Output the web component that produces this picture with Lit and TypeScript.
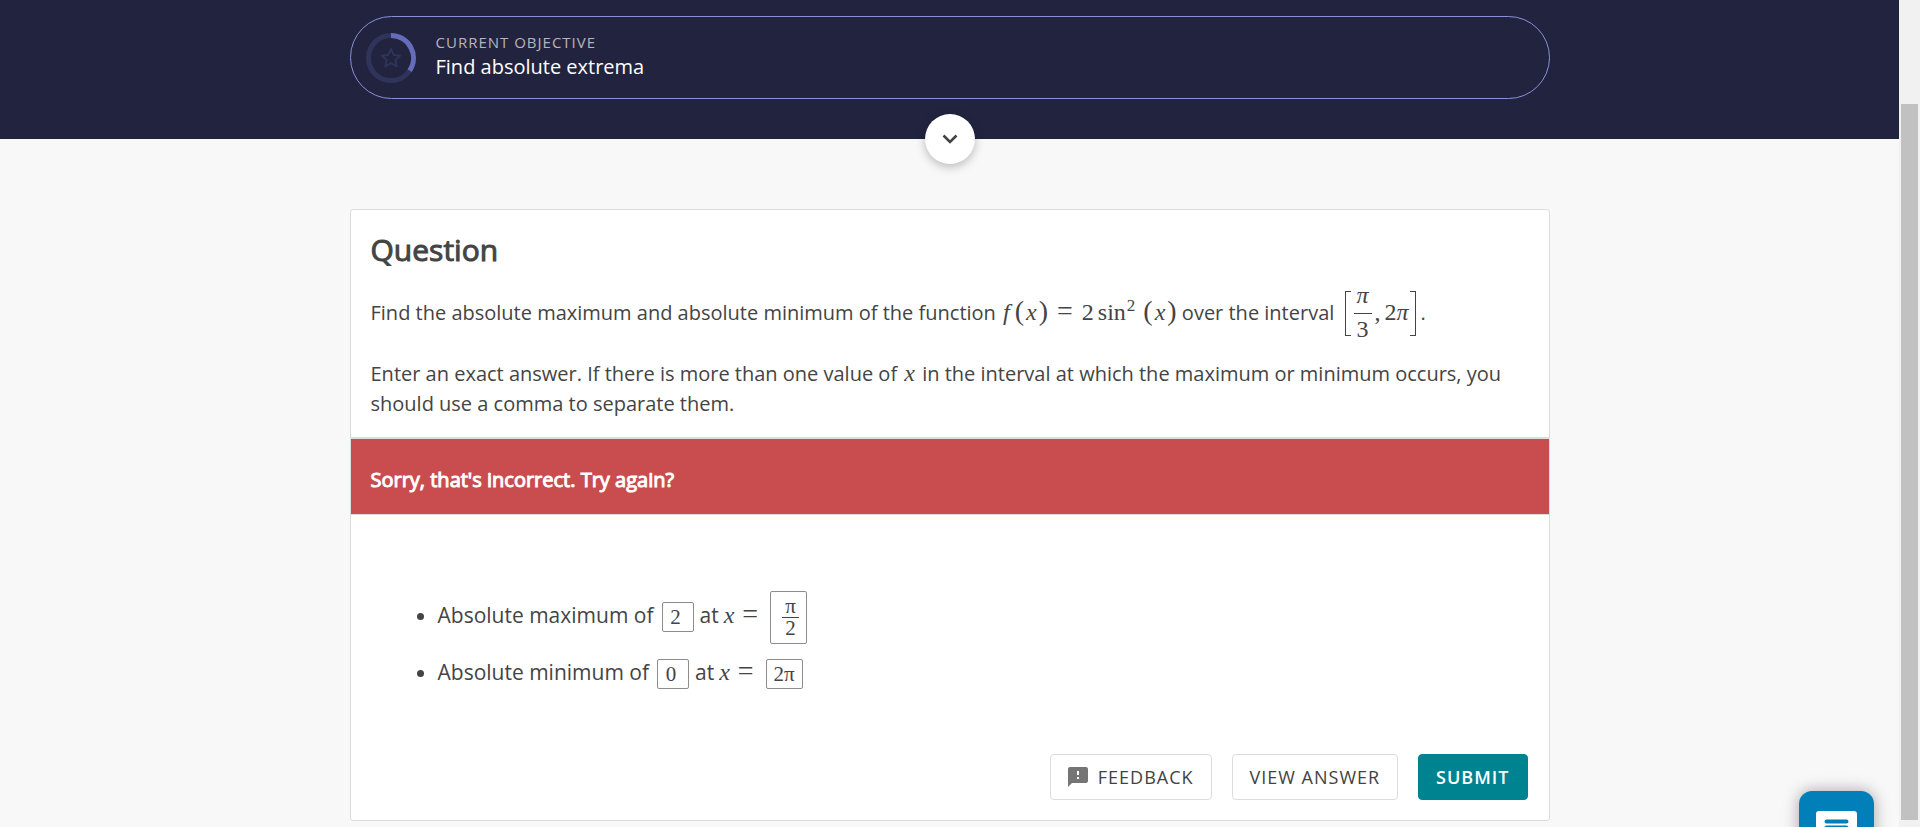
import { LitElement, html, css } from "lit";
import { customElement, property } from "lit/decorators.js";

@customElement("objective-pill")
class ObjectivePill extends LitElement {
  @property() heading = "";
  @property() label = "";

  static styles = css`
    :host {
      display: block;
    }
    .pill {
      display: flex;
      align-items: center;
      gap: 20px;
      box-sizing: border-box;
      min-height: 83px;
      padding: 0 15px;
      border: 1px solid #8b90d8;
      border-radius: 42px;
      color: #fff;
    }
    .ring {
      flex: none;
      width: 50px;
      height: 50px;
    }
    .text {
      padding-bottom: 4px;
    }
    .label {
      font-size: 15px;
      line-height: 22px;
      letter-spacing: 1px;
      color: #b5b5bb;
    }
    .name {
      font-size: 20px;
      line-height: 27px;
    }
  `;

  render() {
    return html`
      <section class="pill">
        <svg class="ring" viewBox="0 0 50 50" fill="none" aria-hidden="true">
          <circle cx="25" cy="25" r="22.5" stroke="#30345a" stroke-width="5" />
          <path d="M25 2.5A22.5 22.5 0 0 1 43.6 37.6" stroke="#656cb9" stroke-width="5" />
          <path
            d="M25 15.8l2.700 6.200 6.600.6-5 4.400 1.500 6.500-5.800-3.400-5.800 3.400 1.500-6.500-5-4.400 6.600-.6z"
            stroke="#30345a"
            stroke-width="1.8"
            stroke-linejoin="round"
          />
        </svg>
        <div class="text">
          <div class="label">${this.label}</div>
          <div class="name">${this.heading}</div>
        </div>
      </section>
    `;
  }
}

@customElement("question-card")
class QuestionCard extends LitElement {
  static styles = css`
    :host {
      display: block;
      box-sizing: border-box;
      border: 1px solid #dcdcdc;
      border-radius: 3px;
      background: #fff;
      color: #444;
    }
    .prompt {
      padding: 20px 20px 18px;
      font-size: 20px;
      line-height: 30px;
    }
    h1 {
      margin: 0;
      font-size: 30px;
      line-height: 40px;
      font-weight: 400;
      -webkit-text-stroke: 1px currentColor;
    }
    p {
      margin: 0;
    }
    .statement {
      margin: 18px 0 20px;
    }
    .math {
      font-family: "Liberation Serif", serif;
      font-size: 24px;
      line-height: 24px;
      white-space: nowrap;
    }
    .math sup {
      margin-left: 1px;
      font-size: 17px;
      line-height: 0;
    }
    .fn {
      margin: 0 5px 0 2px;
    }
    .var {
      margin: 0 2px;
    }
    .big {
      font-size: 28px;
      line-height: 24px;
    }
    .rel {
      margin: 0 9px;
    }
    .thin {
      margin-left: 4px;
    }
    .arg {
      margin-left: 8px;
    }
    .interval {
      display: inline-flex;
      align-items: center;
      vertical-align: -16px;
      margin: 0 5px;
    }
    .bracket {
      box-sizing: border-box;
      width: 6px;
      height: 45px;
      border: 1px solid #444;
    }
    .open {
      border-right: 0;
      margin-right: 3px;
    }
    .close {
      border-left: 0;
    }
    .inner {
      padding: 0 1px 4px 0;
    }
    .frac {
      display: inline-flex;
      flex-direction: column;
      align-items: center;
      width: 18px;
      margin: -5px 3px -5px 0;
    }
    .num {
      padding: 2px 0 8px;
      line-height: 20px;
    }
    .den {
      align-self: stretch;
      border-top: 1px solid currentColor;
      line-height: 30px;
      text-align: center;
    }
    .banner {
      padding: 26px 20px 19px;
      border-top: 2px solid #dcdcdc;
      border-bottom: 1px solid #dcdcdc;
      background: #c94d4f;
      color: #fff;
      font-size: 20px;
      line-height: 30px;
      -webkit-text-stroke: 1px currentColor;
    }
    ul {
      display: grid;
      gap: 10px;
      margin: 0;
      padding: 73px 20px 62px 87px;
      font-size: 21px;
    }
    .answer {
      display: flex;
      align-items: center;
      min-height: 36px;
    }
    .tall {
      min-height: 58px;
    }
    .answer label {
      padding-bottom: 4px;
      line-height: 28px;
    }
    .field {
      box-sizing: border-box;
      width: 32px;
      height: 30px;
      margin: 0 6px 0 8px;
      padding: 0 4px 0 0;
      border: 1px solid #8c8c8c;
      border-radius: 2px;
      background: #fff;
      color: inherit;
      font-family: "Liberation Serif", serif;
      font-size: 21px;
      text-align: center;
    }
    .wide {
      width: 37px;
      margin: 0 0 0 12px;
      padding: 0;
    }
    .fraction {
      display: grid;
      align-content: center;
      justify-items: center;
      height: 53px;
      padding-left: 4px;
    }
    .part {
      box-sizing: border-box;
      width: 17px;
      height: 22px;
      padding: 0;
      border: 0;
      background: none;
      color: inherit;
      font: inherit;
      text-align: center;
    }
    .lower {
      border-top: 1px solid #444;
    }
    .eq {
      margin-left: 5px;
      font-family: "Liberation Serif", serif;
      font-size: 24px;
    }
    .sign {
      margin-left: 2px;
    }
    .actions {
      display: flex;
      justify-content: flex-end;
      flex-wrap: wrap;
      gap: 20px;
      padding: 0 21px 20px 20px;
    }
    .btn {
      display: inline-flex;
      align-items: center;
      gap: 10px;
      box-sizing: border-box;
      height: 46px;
      padding: 0 17px;
      border: 1px solid #dcdcdc;
      border-radius: 4px;
      background: #fff;
      color: #424242;
      font-family: inherit;
      font-size: 18px;
      font-weight: 500;
      letter-spacing: 1px;
      text-transform: uppercase;
      cursor: pointer;
    }
    .btn svg {
      width: 20px;
      height: 20px;
      fill: #757575;
    }
    .primary {
      border-color: #008391;
      background: #008391;
      color: #fff;
      font-weight: 600;
    }
  `;

  render() {
    return html`
      <section class="prompt">
        <h1>Question</h1>
        <p class="statement">
          Find the absolute maximum and absolute minimum of the function
          <span class="math"
            ><i class="fn">f</i><span class="big">(</span><i class="var">x</i
            ><span class="big">)</span><span class="big rel">=</span>2<span class="thin">sin</span
            ><sup>2</sup><span class="big arg">(</span><i class="var">x</i
            ><span class="big">)</span></span
          >
          over the interval
          <span class="math interval"
            ><span class="bracket open"></span
            ><span class="frac"><i class="num">π</i><span class="den">3</span></span
            ><span class="inner">,<span class="thin">2<i>π</i></span></span
            ><span class="bracket close"></span></span
          >.
        </p>
        <p>
          Enter an exact answer. If there is more than one value of
          <i class="math var">x</i> in the interval at which the maximum or minimum occurs, you
          should use a comma to separate them.
        </p>
      </section>
      <div class="banner" role="alert">Sorry, that's incorrect. Try again?</div>
      <form @submit=${(e: Event) => e.preventDefault()}>
        <ul>
          <li>
            <div class="answer tall">
              <label for="max">Absolute maximum of</label>
              <input class="field" id="max" .value=${"2"} />
              <label for="max-num"
                >at<span class="eq"><i>x</i> <span class="big sign">=</span></span></label
              >
              <div class="field wide fraction">
                <input class="part" id="max-num" .value=${"π"} />
                <input class="part lower" aria-label="Denominator" .value=${"2"} />
              </div>
            </div>
          </li>
          <li>
            <div class="answer">
              <label for="min">Absolute minimum of</label>
              <input class="field" id="min" .value=${"0"} />
              <label for="min-at"
                >at<span class="eq"><i>x</i> <span class="big sign">=</span></span></label
              >
              <input class="field wide" id="min-at" .value=${"2π"} />
            </div>
          </li>
        </ul>
        <div class="actions">
          <button class="btn" type="button">
            <svg viewBox="2 2 20 20" aria-hidden="true">
              <path
                d="M20 2H4c-1.1 0-2 .9-2 2v18l4-4h14c1.1 0 2-.9 2-2V4c0-1.1-.9-2-2-2zm-7 12h-2v-2h2v2zm0-4h-2V6h2v4z"
              />
            </svg>
            Feedback
          </button>
          <button class="btn" type="button">View answer</button>
          <button class="btn primary" type="submit">Submit</button>
        </div>
      </form>
    `;
  }
}

@customElement("app-root")
class AppRoot extends LitElement {
  static styles = css`
    :host {
      position: relative;
      display: grid;
      grid-template-columns: minmax(0, 1fr) 21px;
      height: 100vh;
      overflow: hidden;
      background: #f8f8f8;
      font-family: "Open Sans", sans-serif;
    }
    .top {
      position: relative;
      padding: 16px 20px 40px;
      background: #22243f;
    }
    .column {
      max-width: 1200px;
      margin: 0 auto;
    }
    .expand {
      position: absolute;
      left: 50%;
      bottom: -25px;
      display: grid;
      place-items: center;
      width: 50px;
      height: 50px;
      margin-left: -25px;
      padding: 0;
      border: 0;
      border-radius: 50%;
      background: #fff;
      box-shadow: 0 3px 10px rgba(0, 0, 0, 0.25);
      cursor: pointer;
    }
    main {
      padding: 70px 20px 6px;
    }
    .track {
      padding: 104px 2px 7px;
      background: #f1f1f1;
      display: grid;
    }
    .thumb {
      background: #c1c1c1;
    }
    .chat {
      position: absolute;
      right: 46px;
      bottom: -39px;
      width: 75px;
      height: 75px;
      padding: 0;
      border: 0;
      border-radius: 13px;
      background: #007fb8;
      box-shadow: 0 0 16px rgba(0, 0, 0, 0.35);
      cursor: pointer;
    }
    .chat svg {
      display: block;
      width: 75px;
      height: 75px;
    }
  `;

  render() {
    return html`
      <div>
        <header class="top">
          <objective-pill
            class="column"
            label="CURRENT OBJECTIVE"
            heading="Find absolute extrema"
          ></objective-pill>
          <button class="expand" type="button" aria-label="Show objectives">
            <svg width="16" height="10" viewBox="0 0 16 10" fill="none" aria-hidden="true">
              <path d="M1.5 1.5L8 8l6.5-6.5" stroke="#424242" stroke-width="2.6" />
            </svg>
          </button>
        </header>
        <main>
          <question-card class="column"></question-card>
        </main>
      </div>
      <div class="track" aria-hidden="true"><div class="thumb"></div></div>
      <button class="chat" type="button" aria-label="Open chat">
        <svg viewBox="0 0 75 75" aria-hidden="true">
          <path d="M20 20h35a3 3 0 0 1 3 3v33l-9-6H20a3 3 0 0 1-3-3V23a3 3 0 0 1 3-3z" fill="#fff" />
          <path d="M27.500 30.500h20M27.500 36.500h20" stroke="#007fb8" stroke-width="4" stroke-linecap="round" />
        </svg>
      </button>
    `;
  }
}
